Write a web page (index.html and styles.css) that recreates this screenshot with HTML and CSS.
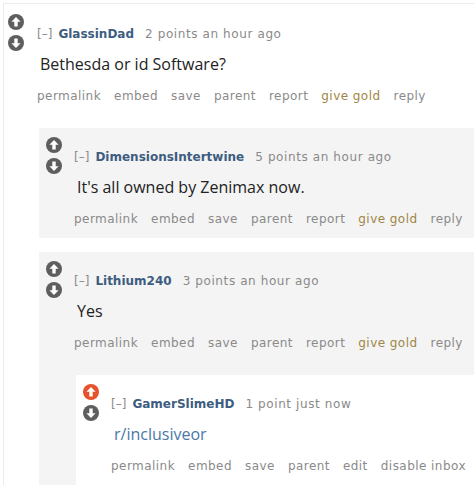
FILE: index.html
```html
<!DOCTYPE html>
<html lang="en">
<head>
    <meta charset="UTF-8">
    <title>Comments</title>
    <link rel="stylesheet" href="styles.css">
</head>
<body>

<div class="sitetable">
    <div class="comment top">
        <div class="midcol">
            <svg class="arrow" viewBox="0 0 15 15"><circle cx="7.5" cy="7.5" r="7.5"/><path d="M7.5 2.8 L11.8 7.3 H9.1 V11.8 H5.9 V7.3 H3.2 Z"/></svg>
            <svg class="arrow" viewBox="0 0 15 15"><circle cx="7.5" cy="7.5" r="7.5"/><path d="M7.5 12.2 L11.8 7.7 H9.1 V3.2 H5.9 V7.7 H3.2 Z"/></svg>
        </div>
        <div class="main">
            <div class="entry">
                <p class="tagline"><span class="expand">[–]</span><a class="author">GlassinDad</a><span class="score">2 points an hour ago</span></p>
                <p class="md">Bethesda or id Software?</p>
                <ul class="buttons">
                    <li>permalink</li><li>embed</li><li>save</li><li>parent</li><li>report</li><li class="gold">give gold</li><li>reply</li>
                </ul>
            </div>
            <div class="child">
                <div class="comment grey">
                    <div class="midcol">
                        <svg class="arrow" viewBox="0 0 15 15"><circle cx="7.5" cy="7.5" r="7.5"/><path d="M7.5 2.8 L11.8 7.3 H9.1 V11.8 H5.9 V7.3 H3.2 Z"/></svg>
                        <svg class="arrow" viewBox="0 0 15 15"><circle cx="7.5" cy="7.5" r="7.5"/><path d="M7.5 12.2 L11.8 7.7 H9.1 V3.2 H5.9 V7.7 H3.2 Z"/></svg>
                    </div>
                    <div class="main">
                        <div class="entry">
                            <p class="tagline"><span class="expand">[–]</span><a class="author">DimensionsIntertwine</a><span class="score">5 points an hour ago</span></p>
                            <p class="md">It's all owned by Zenimax now.</p>
                            <ul class="buttons">
                                <li>permalink</li><li>embed</li><li>save</li><li>parent</li><li>report</li><li class="gold">give gold</li><li>reply</li>
                            </ul>
                        </div>
                    </div>
                </div>

                <div class="comment grey">
                    <div class="midcol">
                        <svg class="arrow" viewBox="0 0 15 15"><circle cx="7.5" cy="7.5" r="7.5"/><path d="M7.5 2.8 L11.8 7.3 H9.1 V11.8 H5.9 V7.3 H3.2 Z"/></svg>
                        <svg class="arrow" viewBox="0 0 15 15"><circle cx="7.5" cy="7.5" r="7.5"/><path d="M7.5 12.2 L11.8 7.7 H9.1 V3.2 H5.9 V7.7 H3.2 Z"/></svg>
                    </div>
                    <div class="main">
                        <div class="entry">
                            <p class="tagline"><span class="expand">[–]</span><a class="author">Lithium240</a><span class="score">3 points an hour ago</span></p>
                            <p class="md">Yes</p>
                            <ul class="buttons">
                                <li>permalink</li><li>embed</li><li>save</li><li>parent</li><li>report</li><li class="gold">give gold</li><li>reply</li>
                            </ul>
                        </div>
                        <div class="child">
                            <div class="comment white">
                                <div class="midcol">
                                    <svg class="arrow upmod" viewBox="0 0 15 15"><circle cx="7.5" cy="7.5" r="7.5"/><path d="M7.5 2.8 L11.8 7.3 H9.1 V11.8 H5.9 V7.3 H3.2 Z"/></svg>
                                    <svg class="arrow" viewBox="0 0 15 15"><circle cx="7.5" cy="7.5" r="7.5"/><path d="M7.5 12.2 L11.8 7.7 H9.1 V3.2 H5.9 V7.7 H3.2 Z"/></svg>
                                </div>
                                <div class="main">
                                    <div class="entry">
                                        <p class="tagline"><span class="expand">[–]</span><a class="author">GamerSlimeHD</a><span class="score">1 point just now</span></p>
                                        <p class="md"><a class="sublink">r/inclusiveor</a></p>
                                        <ul class="buttons">
                                            <li>permalink</li><li>embed</li><li>save</li><li>parent</li><li>edit</li><li>disable inbox</li>
                                        </ul>
                                    </div>
                                </div>
                            </div>
                        </div>
                    </div>
                </div>
            </div>
        </div>
    </div>
</div>

</body>
</html>
```

FILE: styles.css
```css
body {
    margin: 0;
    background-color: #fff;
    font-family: "DejaVu Sans", Verdana, sans-serif;
    overflow: hidden;
}
.sitetable {
    margin: 3px 0 0 3px;
    border-top: 1px solid #ececec;
    border-left: 1px solid #ececec;
}
.comment {
    display: flex;
}
.comment.top {
    padding-top: 1px;
}
.comment.grey {
    background-color: #f4f4f4;
}
.comment.white {
    background-color: #fff;
}
.midcol {
    flex: none;
    width: 28px;
    padding: 9px 0 0 7px;
    display: flex;
    flex-direction: column;
    gap: 5px;
}
.comment.top > .midcol {
    width: 29px;
    padding-left: 4px;
}
.arrow {
    width: 16px;
    height: 16px;
    fill: #5e5e5e;
}
.arrow path {
    fill: #fff;
}
.arrow.upmod {
    fill: #e5522c;
}
.main {
    flex: 1;
    min-width: 0;
}
.entry {
    padding: 20px 0 9px 0;
}
.tagline {
    margin: 0;
    font-size: 12px;
    line-height: 18px;
    white-space: nowrap;
    color: #8a8a8a;
}
.expand {
    color: #8a8a8a;
    margin-right: 6px;
}
.author {
    font-weight: bold;
    color: #3d5d80;
    margin-right: 11px;
}
.score {
    letter-spacing: 0.6px;
}
.md {
    margin: 10px 0 0 3px;
    font-family: "Open Sans", sans-serif;
    font-size: 16px;
    line-height: 22px;
    color: #222;
}
.sublink {
    color: #4a78a6;
}
.buttons {
    list-style: none;
    margin: 11px 0 0 0;
    padding: 0;
    display: flex;
    white-space: nowrap;
    font-size: 12px;
    line-height: 20px;
    letter-spacing: 0.45px;
    color: #8a8a8a;
}
.buttons li {
    margin-right: 13px;
}
.buttons .gold {
    color: #9d8746;
}
.child {
    margin: 13px 0 0 2px;
    display: flex;
    flex-direction: column;
    gap: 14px;
}
```
